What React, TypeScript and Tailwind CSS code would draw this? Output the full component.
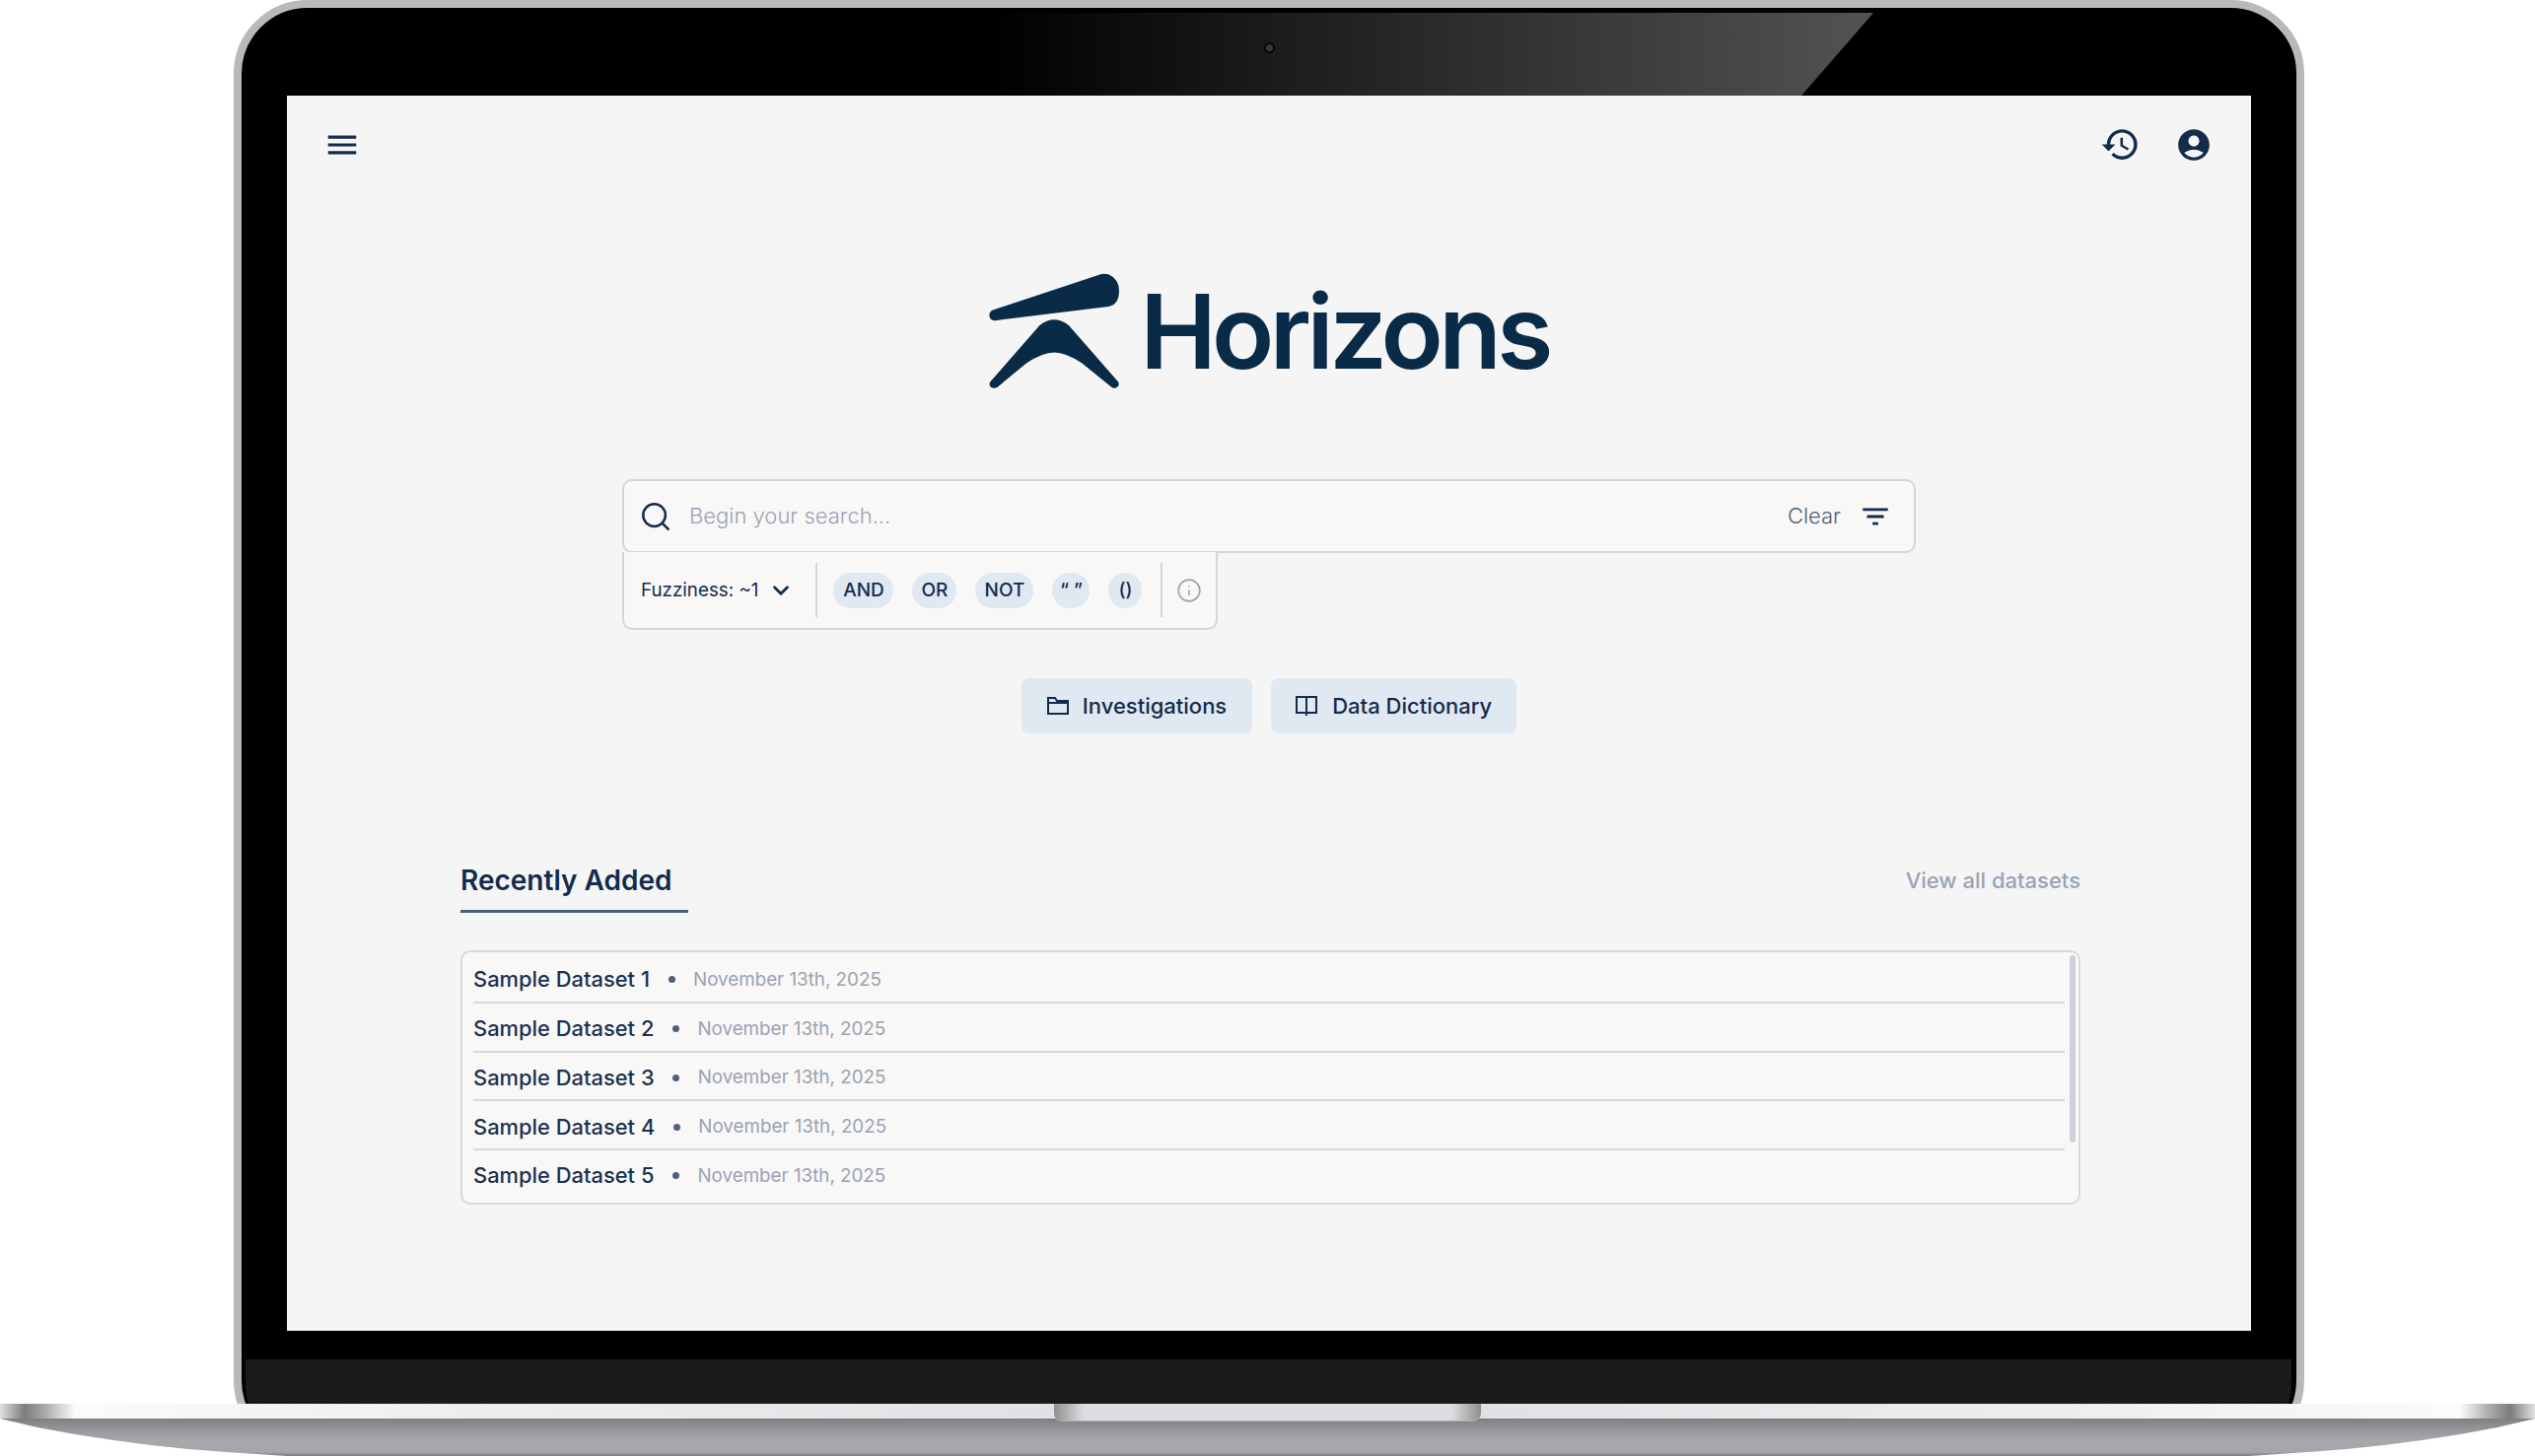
import { ChevronDown, Info, Search } from 'lucide-react';

const datasets = [
    { name: 'Sample Dataset 1', date: 'November 13th, 2025' },
    { name: 'Sample Dataset 2', date: 'November 13th, 2025' },
    { name: 'Sample Dataset 3', date: 'November 13th, 2025' },
    { name: 'Sample Dataset 4', date: 'November 13th, 2025' },
    { name: 'Sample Dataset 5', date: 'November 13th, 2025' },
];

const operators = [
    { label: 'AND', width: 'w-[61px]' },
    { label: 'OR', width: 'w-[45px]' },
    { label: 'NOT', width: 'w-[59px]' },
    { label: '“ ”', width: 'w-[38px]' },
    { label: '()', width: 'w-[34px]' },
];

const Logo = () => (
    <svg viewBox="66 48 400 356" className="h-[119px] w-[133px] shrink-0 fill-[#0a2b48]">
        <path d="M80 162 L400 56 Q415 50 430 54 Q463 68 463 105 Q462 148 430 152 L85 195 Q68 196 67 178 Q68 166 80 162 Z" />
        <path d="M220 210 Q265 175 310 210 L460 382 Q466 392 456 399 Q448 404 440 398 L350 325 Q300 292 265 292 Q230 292 180 325 L92 398 Q82 404 73 399 Q64 392 70 382 Z" />
    </svg>
);

const MenuIcon = () => (
    <svg viewBox="0 0 24 24" className="size-[38px] fill-[#132c4c]">
        <path d="M3 18h18v-2H3v2zm0-5h18v-2H3v2zm0-7v2h18V6H3z" />
    </svg>
);

const HistoryIcon = () => (
    <svg viewBox="0 0 24 24" className="size-[41px] fill-[#132c4c]">
        <path d="M13 3a9 9 0 0 0-9 9H1l3.89 3.89.07.14L9 12H6c0-3.87 3.13-7 7-7s7 3.13 7 7-3.13 7-7 7c-1.93 0-3.68-.79-4.94-2.06l-1.42 1.42A8.954 8.954 0 0 0 13 21a9 9 0 0 0 0-18zm-1 5v5l4.28 2.54.72-1.21-3.5-2.08V8H12z" />
    </svg>
);

const AccountIcon = () => (
    <svg viewBox="0 0 24 24" className="size-[38px] fill-[#132c4c]">
        <path d="M12 2C6.48 2 2 6.48 2 12s4.48 10 10 10 10-4.48 10-10S17.52 2 12 2zm0 4c1.93 0 3.5 1.57 3.5 3.5S13.93 13 12 13s-3.5-1.57-3.5-3.5S10.07 6 12 6zm0 14c-2.03 0-4.43-.82-6.14-2.88C7.55 15.8 9.68 15 12 15s4.45.8 6.14 2.12C16.43 19.18 14.03 20 12 20z" />
    </svg>
);

const FilterIcon = () => (
    <svg viewBox="0 0 24 24" className="size-[34px] fill-[#132c4c]">
        <path d="M10 18h4v-2h-4v2zM3 6v2h18V6H3zm3 7h12v-2H6v2z" />
    </svg>
);

const FolderIcon = () => (
    <svg viewBox="0 0 22 18" className="h-[18px] w-[22px] fill-none stroke-[#132c4c] stroke-2">
        <path d="M1 17V1h7l2 3h11v13H1Z M1 6h20" />
    </svg>
);

const BookIcon = () => (
    <svg viewBox="0 0 22 21" className="h-[21px] w-[22px] fill-none stroke-[#132c4c] stroke-2">
        <path d="M1 1h9l1 1 1-1h9v16H12l-1 1-1-1H1V1Z M11 2v18" />
    </svg>
);

const App = () => {
    return (
        <div className="h-[1477px] w-[2571px] overflow-hidden bg-white font-['Inter',sans-serif]">
            {/* lid */}
            <div className="relative ml-[237px] h-[1475px] w-[2100px] rounded-[75px] border-8 border-[#b9b9b9] bg-black px-[46px] pt-[89px]">
                <div className="absolute left-[755px] top-[5px] h-[84px] w-[900px] bg-[linear-gradient(90deg,#000000,#525454)] [clip-path:polygon(0_0,900px_0,827px_84px,0_84px)]" />
                <div className="absolute left-[1037px] top-[35px] size-[11px] rounded-full border-2 border-[#060606] bg-[#3a3a3e]" />

                {/* screen */}
                <div className="h-[1253px] w-full bg-[#f5f5f5] text-[#132c4c]">
                    <div className="flex items-center justify-between pl-[37px] pr-[39px] pt-[29px]">
                        <MenuIcon />
                        <div className="flex items-center gap-[35px]">
                            <HistoryIcon />
                            <AccountIcon />
                        </div>
                    </div>

                    <div className="mt-[109px] flex h-[119px] items-center justify-center gap-[20px]">
                        <Logo />
                        <span className="text-[104px] font-semibold leading-none tracking-[-4.6px] text-[#0a2b48]">Horizons</span>
                    </div>

                    {/* search */}
                    <div className="mx-auto mt-[91px] w-[1312px]">
                        <div className="flex h-[75px] items-center rounded-[10px] border-2 border-[#d0d6e0] bg-[#f9f8f6] pl-[15px] pr-[22px]">
                            <Search size={34} strokeWidth={1.75} />
                            <span className="ml-[17px] flex-1 text-[22px] font-light text-[#98a3b3]">Begin your search...</span>
                            <span className="text-[22px] font-light text-[#4e6178]">Clear</span>
                            <span className="ml-[18px]"><FilterIcon /></span>
                        </div>
                        <div className="-mt-[1px] flex h-[79px] w-[604px] items-center rounded-b-[10px] border-2 border-t-0 border-[#d0d6e0] bg-[#f9f8f6] pl-[17px]">
                            <span className="pt-[1px] text-[18.8px]">Fuzziness: ~1</span>
                            <ChevronDown size={26} strokeWidth={2.6} className="ml-[10px]" />
                            <div className="ml-[22px] h-[55px] w-[2px] bg-[#d0d6e0]" />
                            <div className="ml-[16px] flex items-center gap-[19px]">
                                {operators.map((op) => (
                                    <span key={op.label} className={`flex h-[36px] items-center justify-center rounded-full bg-[#e0e8f1] pt-[1px] text-[19px] font-medium ${op.width}`}>
                                        {op.label}
                                    </span>
                                ))}
                            </div>
                            <div className="ml-[19px] h-[55px] w-[2px] bg-[#d0d6e0]" />
                            <Info size={26} strokeWidth={1.5} className="ml-[14px] text-[#98a3b3]" />
                        </div>
                    </div>

                    <div className="mt-[49px] flex justify-center gap-[19px]">
                        <button className="flex h-[56px] items-center gap-[14px] rounded-[8px] bg-[#e0e8f1] px-[26px] text-[22px] font-medium">
                            <FolderIcon />
                            Investigations
                        </button>
                        <button className="flex h-[56px] items-center gap-[15px] rounded-[8px] bg-[#e0e8f1] px-[25px] text-[22px] font-medium">
                            <BookIcon />
                            Data Dictionary
                        </button>
                    </div>

                    {/* recently added */}
                    <div className="ml-[176px] mt-[132px] w-[1643px]">
                        <div className="flex items-start justify-between">
                            <div className="w-[231px] border-b-[3px] border-[#4e6178] pb-[13px] text-[28px] font-semibold leading-[34px]">
                                Recently Added
                            </div>
                            <span className="text-[22px] font-medium leading-[34px] text-[#98a3b3]">View all datasets</span>
                        </div>
                        <div className="relative mt-[38px] h-[258px] rounded-[10px] border-2 border-[#d4d9e1] bg-[#f9f8f6] pl-[11px] pr-[14px] pt-[2px]">
                            {datasets.map((d, i) => (
                                <div key={d.name} className={`flex h-[49.75px] items-center ${i < 4 ? 'border-b-2 border-[#d4d9e1] pt-[4px]' : 'pt-[2px]'}`}>
                                    <span className="text-[21.9px] font-medium text-[#1a3150]">{d.name}</span>
                                    <span className="mx-[18.5px] size-[7px] rounded-full bg-[#4e6178]" />
                                    <span className="text-[18.8px] text-[#98a3b3]">{d.date}</span>
                                </div>
                            ))}
                            <div className="absolute right-[3px] top-[3px] h-[190px] w-[6px] rounded-full bg-[#cdd2da]" />
                        </div>
                    </div>
                </div>

                {/* keyboard hinge */}
                <div className="-ml-[42px] -mr-[41px] mt-[29px] h-[88px] rounded-b-[62px] bg-[#1a1a1a]" />
            </div>

            {/* base */}
            <div className="relative z-10 -mt-[51px] h-[53px]">
                <div className="h-[15px] bg-[linear-gradient(90deg,#e2e2e2_0px,#7c7c7c_25px,#a8a8a8_45px,#fbfbfb_76px,#ededed_500px,#dcdde0_1285px,#ededed_2071px,#fbfbfb_2495px,#a8a8a8_2526px,#7c7c7c_2546px,#e2e2e2_2571px)]" />
                <div className="h-[38px] bg-[linear-gradient(180deg,#7e7f83_0%,#9a9b9f_35%,#a7a8ac_60%,#a5a6aa_90%,#77787c_100%)] [clip-path:polygon(0_0,2571px_0,2533px_9px,2495px_16px,2456px_22px,2418px_27px,2380px_31px,2341px_34px,2296px_37px,2280px_38px,291px_38px,275px_37px,230px_34px,191px_31px,153px_27px,115px_22px,76px_16px,38px_9px)]" />
                <div className="absolute left-[1069px] top-0 h-[18px] w-[433px] rounded-b-[8px] border-b border-[#b0b0b3] bg-[linear-gradient(90deg,#8f8f8f_0px,#dcdde0_30px,#dcdde0_403px,#8f8f8f_433px)]" />
            </div>
        </div>
    );
};

export default App;
